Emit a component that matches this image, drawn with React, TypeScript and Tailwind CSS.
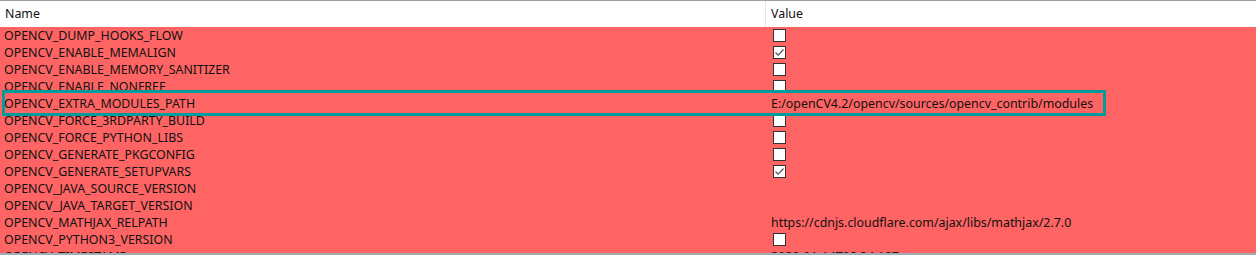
import React from "react";

type Row = { name: string; value?: string; check?: boolean };

const rows: Row[] = [
  { name: "OPENCV_DUMP_HOOKS_FLOW", check: false },
  { name: "OPENCV_ENABLE_MEMALIGN", check: true },
  { name: "OPENCV_ENABLE_MEMORY_SANITIZER", check: false },
  { name: "OPENCV_ENABLE_NONFREE", check: false },
  { name: "OPENCV_EXTRA_MODULES_PATH", value: "E:/openCV4.2/opencv/sources/opencv_contrib/modules" },
  { name: "OPENCV_FORCE_3RDPARTY_BUILD", check: false },
  { name: "OPENCV_FORCE_PYTHON_LIBS", check: false },
  { name: "OPENCV_GENERATE_PKGCONFIG", check: false },
  { name: "OPENCV_GENERATE_SETUPVARS", check: true },
  { name: "OPENCV_JAVA_SOURCE_VERSION", value: "" },
  { name: "OPENCV_JAVA_TARGET_VERSION", value: "" },
  { name: "OPENCV_MATHJAX_RELPATH", value: "https://cdnjs.cloudflare.com/ajax/libs/mathjax/2.7.0" },
  { name: "OPENCV_PYTHON3_VERSION", check: false },
  { name: "OPENCV_TIMESTAMP", value: "2020-01-14T08:34:18Z" },
];

function CheckBox({ checked }: { checked: boolean }) {
  return (
    <div className="w-[13px] h-[13px] border border-[#333333] bg-white flex items-center justify-center">
      {checked && (
        <svg width="11" height="11" viewBox="0 0 11 11">
          <path d="M1.5 5.5 L4.2 8.2 L9.5 2.5" fill="none" stroke="#555555" strokeWidth="1.2" />
        </svg>
      )}
    </div>
  );
}

export default function App() {
  return (
    <div
      className="w-[1256px] h-[255px] flex flex-col overflow-hidden bg-white text-[12.4px] text-[#111111] relative"
      style={{ fontFamily: '"Noto Sans", "Open Sans", sans-serif' }}
    >
      {/* header */}
      <div className="h-[27px] flex-shrink-0 border-t border-[#a0a0a0] flex">
        <div className="w-[766px] pl-[5px] flex items-center border-r border-[#e5e5e5]">Name</div>
        <div className="flex-1 pl-[5px] flex items-center">Value</div>
      </div>

      {/* rows */}
      <div className="flex-1 overflow-hidden bg-[#ff6464]">
        {rows.map(r => (
          <div key={r.name} className="h-[17px] flex items-center leading-none">
            <div className="w-[766px] pl-[4px] pt-px whitespace-nowrap">{r.name}</div>
            <div className="flex-1 pl-[5px] whitespace-nowrap">
              {r.check !== undefined ? (
                <div className="pl-[2px]"><CheckBox checked={r.check} /></div>
              ) : (
                <div className="pt-px">{r.value}</div>
              )}
            </div>
          </div>
        ))}
      </div>

      <div className="h-[2px] flex-shrink-0 bg-[#a3abb3]" />

      {/* highlight box */}
      <div className="absolute left-[2px] top-[90px] w-[1104px] h-[26px] border-[3px] border-[#009b9b] pointer-events-none" />
    </div>
  );
}
